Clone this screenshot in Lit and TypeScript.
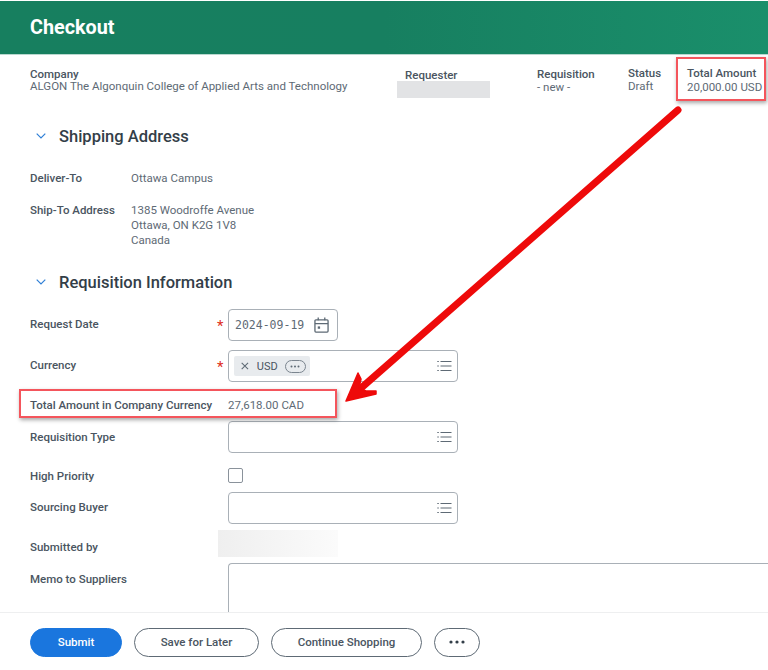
import { LitElement, html, css, svg } from "lit";
import { customElement } from "lit/decorators.js";

const listIcon = html`<svg class="list" width="15" height="12" viewBox="0 0 15 12" fill="none" stroke="#5e6a75" stroke-width="1.2"><path d="M3.5 1.5h11M3.5 6h11M3.5 10.5h11"/><path d="M.3 1.5h1.5M.3 6h1.5M.3 10.5h1.5"/></svg>`;

const chevron = html`<svg class="chev" width="10" height="6" viewBox="0 0 10 6" fill="none" stroke="#2f7fd6" stroke-width="1.2"><path d="M.7.7 5 5l4.3-4.3"/></svg>`;

@customElement("app-root")
export class AppRoot extends LitElement {
  static styles = css`
    :host {
      display: block;
      position: relative;
      width: 768px;
      height: 670px;
      overflow: hidden;
      background: #fff;
      font-family: Roboto, "Liberation Sans", sans-serif;
      font-size: 11.5px;
      color: #5e6a75;
    }
    .hero {
      height: 54px;
      margin-top: 1px;
      box-sizing: border-box;
      padding: 14px 0 0 30px;
      background: linear-gradient(90deg, #177f5f 0%, #177f60 50%, #1a8f6b 100%);
      border-bottom: 1px solid #b9d8cf;
      color: #fff;
      font-size: 19.8px;
      font-weight: 700;
      line-height: 26px;
    }
    .summary {
      position: relative;
      height: 70px;
      line-height: 12px;
    }
    .cell {
      position: absolute;
      white-space: nowrap;
    }
    .cell b {
      display: block;
      font-weight: 500;
      color: #4a5561;
    }
    .company { left: 30px; top: 14px; line-height: 11.5px; }
    .requester { left: 405px; top: 14px; }
    .requisition { left: 537px; top: 13px; line-height: 12.8px; }
    .status { left: 628px; top: 12px; line-height: 13px; }
    .total { left: 687px; top: 12px; line-height: 13.5px; }
    .redact-a {
      position: absolute;
      left: 397px;
      top: 26px;
      width: 93px;
      height: 17px;
      background: #e2e3e5;
    }
    .section {
      display: flex;
      align-items: center;
      height: 22px;
      padding-left: 36px;
      color: #333e48;
      font-size: 16.5px;
      font-weight: 500;
    }
    .chev { margin-right: 13px; }
    .row {
      display: grid;
      grid-template-columns: 101px auto;
      padding-left: 30px;
      line-height: 15px;
    }
    .lbl { font-weight: 500; color: #4a5561; white-space: nowrap; }
    .ship-a { margin-top: 24px; }
    .ship-b { margin-top: 17px; }
    .req { margin-top: 23px; }
    .frow {
      display: grid;
      grid-template-columns: 187px 11px auto;
      align-items: center;
      padding-left: 30px;
    }
    .frow .lbl { padding-bottom: 2px; }
    .frow.d-type .lbl, .frow.d-high .lbl { padding-bottom: 0; }
    .star { color: #de2e21; font-size: 15px; line-height: 15px; padding-top: 2px; }
    .field {
      box-sizing: border-box;
      height: 32px;
      width: 230px;
      border: 1px solid #a9b0b7;
      border-radius: 4px;
      display: flex;
      align-items: center;
      justify-content: space-between;
      padding: 0 5px 0 5px;
      background: #fff;
    }
    .field.end { justify-content: flex-end; }
    .field.date {
      width: 110px;
      padding: 0 8px 1px 6px;
      font-family: "DejaVu Sans Mono", "Liberation Mono", monospace;
      font-size: 11.5px;
    }
    .chip {
      display: flex;
      align-items: center;
      height: 20px;
      width: 76px;
      box-sizing: border-box;
      padding: 0 4px 0 7px;
      background: #e8ebee;
      border-radius: 2px;
      font-size: 11px;
      color: #4a5561;
    }
    .chip svg.x { margin-right: 8px; }
    .more {
      display: flex;
      align-items: center;
      justify-content: center;
      width: 20px;
      height: 11px;
      border: 1px solid #7b858f;
      border-radius: 7px;
      margin-left: 7px;
    }
    .d-date { margin-top: 16px; }
    .d-cur { margin-top: 9px; }
    .amount-row {
      display: grid;
      grid-template-columns: 198px auto;
      align-items: center;
      padding-left: 30px;
      height: 15px;
      margin-top: 16px;
      line-height: 15px;
    }
    .d-type { margin-top: 8px; }
    .frow.cols { grid-template-columns: 198px auto; }
    .check {
      box-sizing: border-box;
      width: 15px;
      height: 15px;
      border: 1px solid #8a929b;
      border-radius: 2px;
    }
    .d-high { margin-top: 15px; }
    .d-buyer { margin-top: 9px; }
    .sub {
      display: grid;
      grid-template-columns: 188px auto;
      align-items: center;
      padding-left: 30px;
      height: 27px;
      margin-top: 6px;
    }
    .sub .lbl { padding-top: 6px; }
    .redact-b {
      width: 120px;
      height: 27px;
      background: linear-gradient(90deg, #efefef, #fbfbfb);
    }
    .memo {
      display: grid;
      grid-template-columns: 198px 1fr;
      padding-left: 30px;
      margin-top: 6px;
      height: 57px;
      overflow: hidden;
    }
    .memo .lbl { padding-top: 9px; }
    .memo-box {
      box-sizing: border-box;
      height: 80px;
      border: 1px solid #a9b0b7;
      border-radius: 4px 0 0 4px;
      border-right: none;
    }
    .footer {
      position: absolute;
      left: 0;
      right: 0;
      top: 612px;
      height: 58px;
      box-sizing: border-box;
      border-top: 1px solid #eeeff0;
      padding: 15px 0 0 30px;
      display: flex;
      gap: 12px;
      background: #fff;
    }
    .btn {
      box-sizing: border-box;
      height: 29px;
      border-radius: 15px;
      border: 1px solid #5e6a75;
      background: #fff;
      color: #4a5561;
      font: 500 11.5px Roboto, "Liberation Sans", sans-serif;
      padding: 0 0 2px;
      display: flex;
      align-items: center;
      justify-content: center;
    }
    .submit { width: 92px; background: #1a76de; border-color: #1a76de; color: #fff; }
    .save { width: 125px; }
    .cont { width: 151px; }
    .dots { width: 46px; }
    .callout {
      position: absolute;
      box-sizing: border-box;
      border: 2px solid #f4555c;
      box-shadow: 1px 2px 4px rgba(0, 0, 0, 0.35);
      pointer-events: none;
    }
    .c1 { left: 676px; top: 57px; width: 90px; height: 44px; }
    .c2 { left: 19px; top: 389px; width: 318px; height: 29px; }
    .arrow { position: absolute; left: 0; top: 0; pointer-events: none; }
  `;

  render() {
    return html`
      <div class="hero">Checkout</div>
      <div class="summary">
        <div class="cell company"><b>Company</b>ALGON The Algonquin College of Applied Arts and Technology</div>
        <div class="cell requester"><b>Requester</b></div>
        <div class="redact-a"></div>
        <div class="cell requisition"><b>Requisition</b>- new -</div>
        <div class="cell status"><b>Status</b>Draft</div>
        <div class="cell total"><b>Total Amount</b>20,000.00 USD</div>
      </div>

      <div class="section">${chevron}Shipping Address</div>
      <div class="row ship-a"><span class="lbl">Deliver-To</span><span>Ottawa Campus</span></div>
      <div class="row ship-b"><span class="lbl">Ship-To Address</span><span>1385 Woodroffe Avenue<br />Ottawa, ON K2G 1V8<br />Canada</span></div>

      <div class="section req">${chevron}Requisition Information</div>

      <div class="frow d-date">
        <span class="lbl">Request Date</span><span class="star">*</span>
        <div class="field date">2024-09-19
          <svg width="15" height="16" viewBox="0 0 16 17" fill="none" stroke="#5e6a75" stroke-width="1.4"><rect x="1" y="3" width="14" height="13" rx="1"/><path d="M1 7h14M4.5 .5v3M11.5 .5v3"/><rect x="4" y="10" width="2.5" height="2.5" fill="#5e6a75" stroke="none"/></svg>
        </div>
      </div>
      <div class="frow d-cur">
        <span class="lbl">Currency</span><span class="star">*</span>
        <div class="field">
          <div class="chip">
            <svg class="x" width="8" height="8" viewBox="0 0 8 8" stroke="#5e6a75" stroke-width="1.1"><path d="M.7.7l6.6 6.6M7.3.7.7 7.3"/></svg>
            USD
            <span class="more"><svg width="10" height="3" viewBox="0 0 10 3" fill="#5e6a75"><circle cx="1.5" cy="1.5" r="1"/><circle cx="5" cy="1.5" r="1"/><circle cx="8.5" cy="1.5" r="1"/></svg></span>
          </div>
          ${listIcon}
        </div>
      </div>
      <div class="amount-row"><span class="lbl">Total Amount in Company Currency</span><span>27,618.00 CAD</span></div>
      <div class="frow cols d-type"><span class="lbl">Requisition Type</span><div class="field end">${listIcon}</div></div>
      <div class="frow cols d-high"><span class="lbl">High Priority</span><div class="check"></div></div>
      <div class="frow cols d-buyer"><span class="lbl">Sourcing Buyer</span><div class="field end">${listIcon}</div></div>
      <div class="sub"><span class="lbl">Submitted by</span><div class="redact-b"></div></div>
      <div class="memo"><span class="lbl">Memo to Suppliers</span><div class="memo-box"></div></div>

      <div class="footer">
        <button class="btn submit">Submit</button>
        <button class="btn save">Save for Later</button>
        <button class="btn cont">Continue Shopping</button>
        <button class="btn dots"><svg width="16" height="4" viewBox="0 0 16 4" fill="#333e48"><circle cx="2" cy="2" r="1.6"/><circle cx="8" cy="2" r="1.6"/><circle cx="14" cy="2" r="1.6"/></svg></button>
      </div>

      <div class="callout c1"></div>
      <div class="callout c2"></div>
      <svg class="arrow" width="768" height="670" viewBox="0 0 768 670">
        ${svg`<path d="M678 110 L352 396" stroke="#ee0a0a" stroke-width="7" stroke-linecap="round" fill="none"/>
        <path d="M346 401 L358 373 L361 379 L359 388 L366 391 L376 391 L376 394 Z" fill="#ee0a0a" stroke="#ee0a0a" stroke-width="1.5" stroke-linejoin="round"/>`}
      </svg>
    `;
  }
}
